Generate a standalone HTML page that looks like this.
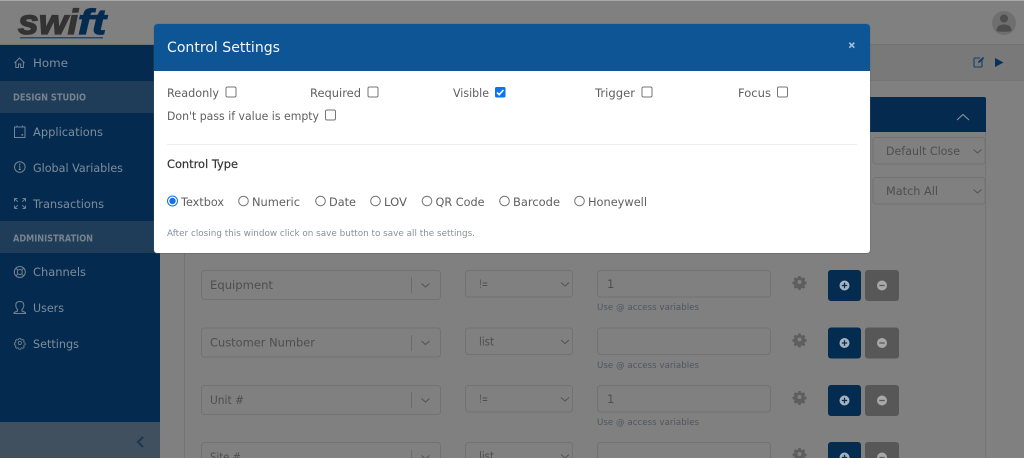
<!DOCTYPE html>
<html><head><meta charset="utf-8"><title>Control Settings</title>
<style>
html,body{margin:0;padding:0;width:1024px;height:458px;overflow:hidden;background:#808080}
svg{display:block}
text{font-family:"DejaVu Sans","Liberation Sans",sans-serif;white-space:pre}
.s{font-size:11.5px;fill:#7f8c99}
.h{font-size:9.5px;font-weight:bold;fill:#76828e}
.m{font-size:11.5px;fill:#5f5f5f}
.r{font-size:11.5px;fill:#4e4e4e}
.b{font-size:11.5px;fill:#565656}
.u{font-size:9px;fill:#4f5660}
.ic{fill:none;stroke:#75828f;stroke-width:1}
.f{fill:none;stroke:#727272;stroke-width:1}
.c{fill:none;stroke:#5c5c5c;stroke-width:1.2}
.cb{fill:#fff;stroke:#767676;stroke-width:1}
</style></head><body>
<svg width="1024" height="458" viewBox="0 0 1024 458" xmlns="http://www.w3.org/2000/svg">
<defs>
<g id="gear"><path fill="#5e5e5e" fill-rule="evenodd" d="M-1.2-6h2.4l.3 1.6 1.2.5 1.4-.9 1.7 1.7-.9 1.4.5 1.2 1.6.3v2.4l-1.6.3-.5 1.2.9 1.4-1.7 1.7-1.4-.9-1.2.5-.3 1.6h-2.4l-.3-1.6-1.2-.5-1.4.9-1.7-1.7.9-1.4-.5-1.2-1.6-.3v-2.4l1.6-.3.5-1.2-.9-1.4 1.7-1.7 1.4.9 1.2-.5zM0-2a2 2 0 1 0 0 4 2 2 0 0 0 0-4z"/></g>
<g id="plus"><rect width="33" height="31" rx="3" fill="#042b50"/><circle cx="16.500" cy="15.500" r="5" fill="#a5b2bf"/><path d="M16.500 12.800v5.400M13.800 15.500h5.400" stroke="#042b50" stroke-width="1.300"/></g>
<g id="minus"><rect width="34" height="31" rx="3" fill="#575757"/><circle cx="17" cy="15.500" r="5" fill="#a8a8a8"/><path d="M14.300 15.500h5.400" stroke="#575757" stroke-width="1.300"/></g>
<g id="chev"><path d="M-4-1.500L0 2l4-3.500" fill="none" stroke="#555" stroke-width="1.100"/></g>
</defs>

<!-- page background -->
<rect width="1024" height="458" fill="#808080"/>
<rect width="1024" height="1" fill="#a8a8a8"/>
<rect y="44" width="1024" height="1" fill="#727272"/>
<rect x="160" y="45" width="864" height="36" fill="#797979"/>
<rect x="160" y="80" width="864" height="1" fill="#747474"/>

<!-- logo -->
<text x="18" y="34" font-weight="bold" font-style="italic" textLength="60" lengthAdjust="spacingAndGlyphs" style="font-family:'Liberation Sans',sans-serif;font-size:35px" fill="#333333" stroke="#333333" stroke-width="1.300">swi</text>
<text x="78" y="34" font-weight="bold" font-style="italic" textLength="28" lengthAdjust="spacingAndGlyphs" style="font-family:'Liberation Sans',sans-serif;font-size:35px" fill="#042b50" stroke="#042b50" stroke-width="1.300">ft</text>
<rect x="20" y="37" width="83" height="1.500" fill="#2e4765"/>

<!-- avatar -->
<circle cx="1004" cy="23" r="12" fill="#6f6f6f"/>
<circle cx="1004" cy="18.500" r="4" fill="#4e4e4e"/>
<path d="M996.500 31c0-5 3-6.500 7.500-6.500s7.500 1.500 7.500 6.500c-2 1-13 1-15 0z" fill="#4e4e4e"/>

<!-- toolbar icons -->
<path d="M982 60.500v5.500a1 1 0 0 1-1 1h-6a1 1 0 0 1-1-1v-7a1 1 0 0 1 1-1h5" fill="none" stroke="#163f66" stroke-width="1.100"/>
<path d="M978 63l.5-2 4.500-4 1.300 1.300-4.400 4.300z" fill="#163f66"/>
<path d="M995 58l8.500 4.500-8.500 4.500z" fill="#07305a"/>

<!-- sidebar -->
<rect y="45" width="160" height="377" fill="#042b4f"/>
<rect y="81" width="160" height="32" fill="#1f3d58"/>
<rect y="221" width="160" height="32" fill="#1f3d58"/>
<rect y="422" width="160" height="36" fill="#40505f"/>
<path d="M143 437l-5 5 5 5" fill="none" stroke="#1e3650" stroke-width="2.200"/>

<text class="s" x="33" y="67" textLength="35" lengthAdjust="spacingAndGlyphs">Home</text>
<text class="h" x="13" y="100.500" textLength="73" lengthAdjust="spacingAndGlyphs">DESIGN STUDIO</text>
<text class="s" x="33" y="136" textLength="70" lengthAdjust="spacingAndGlyphs">Applications</text>
<text class="s" x="33" y="172" textLength="90" lengthAdjust="spacingAndGlyphs">Global Variables</text>
<text class="s" x="33" y="208" textLength="71" lengthAdjust="spacingAndGlyphs">Transactions</text>
<text class="h" x="13" y="241.500" textLength="80" lengthAdjust="spacingAndGlyphs">ADMINISTRATION</text>
<text class="s" x="33" y="276" textLength="53" lengthAdjust="spacingAndGlyphs">Channels</text>
<text class="s" x="33" y="312" textLength="31" lengthAdjust="spacingAndGlyphs">Users</text>
<text class="s" x="33" y="348" textLength="46" lengthAdjust="spacingAndGlyphs">Settings</text>

<!-- sidebar icons -->
<path class="ic" d="M14.500 63l5-5 5 5M15.800 62v5.500h2.700v-3.500h2.200v3.500h2.700V62"/>
<path class="ic" d="M14.500 127h10.500v10.500H14.500zM17 125.500v2M22.500 125.500v2"/>
<rect x="21.500" y="134" width="1.600" height="1.600" fill="#75828f"/>
<circle class="ic" cx="19.800" cy="167" r="5.300"/>
<path class="ic" d="M19.800 166v3.500M18.700 169.500h2.200M19 165.800h.8"/>
<circle cx="19.800" cy="164.200" r=".7" fill="#75828f"/>
<path class="ic" d="M14.500 198.500v3M14.500 198.500h3M14.800 198.800l3 3M25.500 198.500v3M25.500 198.500h-3M25.200 198.800l-3 3M14.500 208.500v-3M14.500 208.500h3M14.800 208.200l3-3M25.500 208.500v-3M25.500 208.500h-3M25.200 208.200l-3-3"/>
<circle class="ic" cx="19.800" cy="272" r="5.500"/>
<circle class="ic" cx="19.800" cy="272" r="2.500"/>
<path class="ic" d="M16 268.200l2 2M23.600 268.200l-2 2M16 275.800l2-2M23.600 275.800l-2-2"/>
<path class="ic" d="M17.600 309.500c-1.200-1.200-1.800-3-1.800-4.300 0-2.500 1.700-3.700 4-3.700s4 1.200 4 3.700c0 1.300-.6 3.100-1.800 4.300v1.500l3.500 1.500v1H14.100v-1l3.500-1.500z"/>
<g transform="translate(19.800 344) scale(.8)"><path class="ic" stroke-width="1.250" d="M-1.200-5.500h2.400l.3 1.400 1.200.5 1.200-.8 1.700 1.700-.8 1.200.5 1.200 1.400.3v2.400l-1.400.3-.5 1.200.8 1.200-1.700 1.700-1.200-.8-1.200.5-.3 1.400h-2.400l-.3-1.400-1.200-.5-1.200.8-1.700-1.700.8-1.200-.5-1.200-1.400-.3v-2.400l1.400-.3.500-1.200-.8-1.200 1.700-1.700 1.200.8 1.200-.5z" transform="translate(0 -1.300)"/><circle class="ic" r="2" cy="-1.300"/></g>

<!-- card -->
<path d="M184.500 97v361M985.500 132v326" stroke="#747474" fill="none"/>
<path d="M184 132v-33a2 2 0 0 1 2-2h798a2 2 0 0 1 2 2v33z" fill="#042b4f"/>
<path d="M957 120l6-5.500 6 5.500" fill="none" stroke="#8995a1" stroke-width="1.100"/>

<!-- right selects -->
<rect class="f" x="873" y="137.500" width="112" height="26.500" rx="3"/>
<text class="r" x="886" y="155" textLength="74" lengthAdjust="spacingAndGlyphs">Default Close</text>
<use href="#chev" x="977.500" y="151"/>
<rect class="f" x="873" y="177.500" width="112" height="26.500" rx="3"/>
<text class="r" x="886" y="195" textLength="52" lengthAdjust="spacingAndGlyphs">Match All</text>
<use href="#chev" x="977.500" y="191"/>

<!-- row 1 -->
<g>
<rect class="f" x="201.500" y="270.500" width="239" height="29" rx="3"/>
<path d="M411.500 277v16" stroke="#6c6c6c"/>
<use href="#chev" x="425.500" y="285"/>
<text class="r" x="210" y="289" textLength="63" lengthAdjust="spacingAndGlyphs">Equipment</text>
<rect class="f" x="465.500" y="270.500" width="107" height="26.500" rx="3"/>
<text class="r" x="479" y="288" textLength="9" lengthAdjust="spacingAndGlyphs">!=</text>
<use href="#chev" x="565" y="284"/>
<rect class="f" x="597.500" y="270.500" width="173" height="26.500" rx="3"/>
<text class="r" x="607" y="288">1</text>
<text class="u" x="597" y="310" textLength="102" lengthAdjust="spacingAndGlyphs">Use @ access variables</text>
<use href="#gear" x="799.500" y="282"/>
<use href="#plus" x="828" y="270"/>
<use href="#minus" x="865" y="270"/>
</g>
<!-- row 2 -->
<g>
<rect class="f" x="201.500" y="328" width="239" height="29" rx="3"/>
<path d="M411.500 335v16" stroke="#6c6c6c"/>
<use href="#chev" x="425.500" y="342.500"/>
<text class="r" x="210" y="346.500" textLength="105" lengthAdjust="spacingAndGlyphs">Customer Number</text>
<rect class="f" x="465.500" y="328" width="107" height="26.500" rx="3"/>
<text class="r" x="479" y="345.500" textLength="15" lengthAdjust="spacingAndGlyphs">list</text>
<use href="#chev" x="565" y="341.500"/>
<rect class="f" x="597.500" y="328" width="173" height="26.500" rx="3"/>
<text class="u" x="597" y="368" textLength="102" lengthAdjust="spacingAndGlyphs">Use @ access variables</text>
<use href="#gear" x="799.500" y="339.500"/>
<use href="#plus" x="828" y="327.500"/>
<use href="#minus" x="865" y="327.500"/>
</g>
<!-- row 3 -->
<g>
<rect class="f" x="201.500" y="385.500" width="239" height="29" rx="3"/>
<path d="M411.500 392v16" stroke="#6c6c6c"/>
<use href="#chev" x="425.500" y="400"/>
<text class="r" x="210" y="404" textLength="34" lengthAdjust="spacingAndGlyphs">Unit #</text>
<rect class="f" x="465.500" y="385.500" width="107" height="26.500" rx="3"/>
<text class="r" x="479" y="403" textLength="9" lengthAdjust="spacingAndGlyphs">!=</text>
<use href="#chev" x="565" y="399"/>
<rect class="f" x="597.500" y="385.500" width="173" height="26.500" rx="3"/>
<text class="r" x="607" y="403">1</text>
<text class="u" x="597" y="425" textLength="102" lengthAdjust="spacingAndGlyphs">Use @ access variables</text>
<use href="#gear" x="799.500" y="397"/>
<use href="#plus" x="828" y="385"/>
<use href="#minus" x="865" y="385"/>
</g>
<!-- row 4 -->
<g>
<rect class="f" x="201.500" y="442.500" width="239" height="29" rx="3"/>
<path d="M411.500 450v16" stroke="#6c6c6c"/>
<use href="#chev" x="425.500" y="457"/>
<text class="r" x="210" y="461" textLength="31" lengthAdjust="spacingAndGlyphs">Site #</text>
<rect class="f" x="465.500" y="442.500" width="107" height="26.500" rx="3"/>
<text class="r" x="479" y="460" textLength="15" lengthAdjust="spacingAndGlyphs">list</text>
<use href="#chev" x="565" y="456"/>
<rect class="f" x="597.500" y="442.500" width="173" height="26.500" rx="3"/>
<use href="#gear" x="799.500" y="454"/>
<use href="#plus" x="828" y="442"/>
<use href="#minus" x="865" y="442"/>
</g>

<!-- modal -->
<rect x="153.500" y="23.500" width="717" height="230.500" rx="4" fill="#5a5a5a" opacity=".45"/>
<rect x="154" y="24" width="716" height="229" rx="3" fill="#fff"/>
<path d="M154 71V27a3 3 0 0 1 3-3h710a3 3 0 0 1 3 3v44z" fill="#0e5595"/>
<text x="167" y="52" style="font-size:14px" fill="#f4f7fa" textLength="113" lengthAdjust="spacingAndGlyphs">Control Settings</text>
<path d="M849.300 42.700l5 5M854.300 42.700l-5 5" stroke="#a9c3da" stroke-width="1.500"/>

<text class="m" x="167" y="97" textLength="52" lengthAdjust="spacingAndGlyphs">Readonly</text>
<rect class="cb" x="226" y="87" width="10" height="10" rx="1.500"/>
<text class="m" x="310" y="97" textLength="51" lengthAdjust="spacingAndGlyphs">Required</text>
<rect class="cb" x="368" y="87" width="10" height="10" rx="1.500"/>
<text class="m" x="453" y="97" textLength="36" lengthAdjust="spacingAndGlyphs">Visible</text>
<rect x="495" y="87" width="10.500" height="10.500" rx="1.500" fill="#0a75f0"/>
<path d="M497 92.500l2.200 2.200 4.200-4.700" fill="none" stroke="#fff" stroke-width="1.600"/>
<text class="m" x="595" y="97" textLength="40" lengthAdjust="spacingAndGlyphs">Trigger</text>
<rect class="cb" x="642" y="87" width="10" height="10" rx="1.500"/>
<text class="m" x="738" y="97" textLength="33" lengthAdjust="spacingAndGlyphs">Focus</text>
<rect class="cb" x="777.500" y="87" width="10" height="10" rx="1.500"/>
<text class="m" x="167" y="120" textLength="152" lengthAdjust="spacingAndGlyphs">Don't pass if value is empty</text>
<rect class="cb" x="325.500" y="110" width="10" height="10" rx="1.500"/>

<rect x="167" y="144" width="690" height="1" fill="#eeeeee"/>
<text x="167" y="168" style="font-size:11.5px;font-weight:500" fill="#333" stroke="#333" stroke-width=".2" textLength="71" lengthAdjust="spacingAndGlyphs">Control Type</text>

<circle cx="172.500" cy="201" r="5" fill="#fff" stroke="#0a75f0"/>
<circle cx="172.500" cy="201" r="3.200" fill="#0a75f0"/>
<text class="m" x="181" y="206" textLength="43" lengthAdjust="spacingAndGlyphs">Textbox</text>
<circle class="cb" cx="243.500" cy="201" r="4.800"/>
<text class="m" x="252" y="206" textLength="48" lengthAdjust="spacingAndGlyphs">Numeric</text>
<circle class="cb" cx="320.500" cy="201" r="4.800"/>
<text class="m" x="329" y="206" textLength="27" lengthAdjust="spacingAndGlyphs">Date</text>
<circle class="cb" cx="375.500" cy="201" r="4.800"/>
<text class="m" x="384" y="206" textLength="23" lengthAdjust="spacingAndGlyphs">LOV</text>
<circle class="cb" cx="427" cy="201" r="4.800"/>
<text class="m" x="435.500" y="206" textLength="49" lengthAdjust="spacingAndGlyphs">QR Code</text>
<circle class="cb" cx="504.500" cy="201" r="4.800"/>
<text class="m" x="513" y="206" textLength="47" lengthAdjust="spacingAndGlyphs">Barcode</text>
<circle class="cb" cx="579.500" cy="201" r="4.800"/>
<text class="m" x="588" y="206" textLength="59" lengthAdjust="spacingAndGlyphs">Honeywell</text>
<text x="167" y="236" style="font-size:9px" fill="#84909c" textLength="308" lengthAdjust="spacingAndGlyphs">After closing this window click on save button to save all the settings.</text>
</svg>
</body></html>
